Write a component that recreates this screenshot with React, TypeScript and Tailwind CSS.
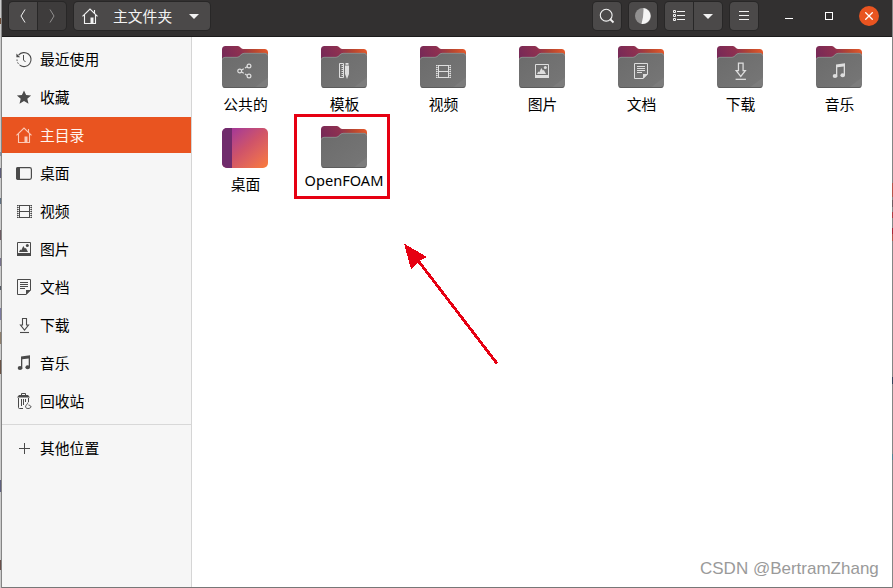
import { useState, type ReactNode } from "react";

type IconName =
  | "recent"
  | "star"
  | "home"
  | "desktop"
  | "video"
  | "picture"
  | "document"
  | "download"
  | "music"
  | "trash"
  | "plus"
  | "share"
  | "template";

const GLYPHS: Record<IconName, ReactNode> = {
  recent: (
    <g fill="none" stroke="currentColor">
      <path d="M2.6 4.2A7 7 0 1 1 4 14.3" strokeWidth="1.1" />
      <path d="M1 8.5a7 7 0 0 0 3 5.8" strokeDasharray="1.6 1.4" />
      <path d="M7.500 4v5l2 2" />
      <path d="M0.4 2.6v3.6h3.8z" fill="currentColor" stroke="none" />
    </g>
  ),
  star: <path fill="currentColor" d="M8 1.400l2.100 4.600 5 .4-3.800 3.300 1.200 5L8 12l-4.500 2.700 1.200-5L.9 6.400l5-.4z" />,
  home: (
    <g fill="none" stroke="currentColor" strokeWidth="1.1">
      <path d="M.5 8.3 8 1l7.500 7.300M2.500 7v8.500h11V7M12.500 2v4" />
      <path d="M8.500 9.500h3v6h-3z" fill="currentColor" stroke="none" />
    </g>
  ),
  desktop: (
    <g>
      <rect x=".6" y="2.600" width="14.800" height="11.800" rx="1.800" fill="none" stroke="currentColor" strokeWidth="1.200" />
      <path d="M2 2h2v13H2a2 2 0 0 1-2-2V4a2 2 0 0 1 2-2z" fill="currentColor" />
    </g>
  ),
  video: (
    <g fill="none" stroke="currentColor">
      <path d="M3.500 2v13M13.500 2v13M3.500 2.500h10M3.500 8.500h10M3.500 14.500h10" />
      <path d="M1.500 2v13M15.500 2v13" strokeDasharray="1.300 .7" />
      <path d="M2.500 2v13M14.500 2v13" strokeDasharray="1 1" opacity=".7" />
    </g>
  ),
  picture: (
    <g>
      <path d="M1.500 1.500h13v13h-13z" fill="none" stroke="currentColor" />
      <path d="M1 12h14v3H1zM3 11l1.300-2.500 1 .7L7.300 5l1.600 2.500 1-.5L12 11z" fill="currentColor" />
      <circle cx="11.300" cy="4.500" r="1.500" fill="currentColor" />
    </g>
  ),
  document: (
    <g fill="none" stroke="currentColor">
      <path d="M1.500.500h13V11L10 15.500H1.500z" />
      <path d="M4 3.500h8M4 5.500h8M4 7.500h8M4 9.500h5" />
      <path d="M10 16v-5h5z" fill="currentColor" stroke="none" />
    </g>
  ),
  download: (
    <g fill="none" stroke="currentColor" strokeWidth="1.100">
      <path d="M6.500 1.500h4v6.500h2L8.500 13 4.500 8h2z" />
      <path d="M4 15.500h9" />
    </g>
  ),
  music: (
    <g>
      <path d="M5 1.500 14 .300v12h-1.300V3.500L6.300 4.300V14H5z" fill="currentColor" />
      <ellipse cx="4" cy="13" rx="2.300" ry="2" fill="currentColor" />
      <ellipse cx="11.700" cy="12.200" rx="2.300" ry="2" fill="currentColor" />
    </g>
  ),
  trash: (
    <g fill="none" stroke="currentColor">
      <path d="M5.500 2V.500h4V2" />
      <path d="M1 4.500 3 2h9l2 2.500z" fill="currentColor" stroke="none" />
      <path d="M2.500 5v9.500a1 1 0 0 0 1 1H7M12.500 5v4M5.500 6v7M7.500 6v6M9.500 6v3" />
      <path d="M12 9.500c-.5 1.500-2 2.300-2.500 4.300.3 1.200 1.300 1.700 2.500 1.700s2.700-.4 3-1.700c-.3-1.300-1.500-1.500-2.500-1.800" />
    </g>
  ),
  plus: <path d="M8.500 3v11M3 8.500h11" stroke="currentColor" />,
  share: (
    <g fill="none" stroke="currentColor" strokeWidth="1.200">
      <circle cx="2.700" cy="8" r="1.900" />
      <circle cx="12" cy="3" r="1.900" />
      <circle cx="12" cy="13" r="1.900" />
      <path d="M4.500 7l2.300-1.300M8 5l2-1.200M4.500 9l2.300 1.300M8 11l2 1.200" />
    </g>
  ),
  template: (
    <g>
      <path d="M3.500.500h4v14h-4z" fill="none" stroke="currentColor" />
      <path d="M5.500 2.500H7M5.500 4.500H7M5.500 6.500H7M5.500 8.500H7M5.500 10.500H7M5.500 12.500H7" stroke="currentColor" />
      <path d="M9 2.500h4v8.500l-2 5-2-5zM9.500 0h3v1.800h-3z" fill="currentColor" />
    </g>
  ),
};

function Icon({ name, className = "" }: { name: IconName; className?: string }) {
  return (
    <svg viewBox="0 0 16 16" className={`block size-4 shrink-0 overflow-visible ${className}`}>
      {GLYPHS[name]}
    </svg>
  );
}

const PLACES: { icon: IconName; label: string }[] = [
  { icon: "recent", label: "最近使用" },
  { icon: "star", label: "收藏" },
  { icon: "home", label: "主目录" },
  { icon: "desktop", label: "桌面" },
  { icon: "video", label: "视频" },
  { icon: "picture", label: "图片" },
  { icon: "document", label: "文档" },
  { icon: "download", label: "下载" },
  { icon: "music", label: "音乐" },
  { icon: "trash", label: "回收站" },
];

const FOLDERS: { icon?: IconName; label: string; desktop?: boolean }[] = [
  { icon: "share", label: "公共的" },
  { icon: "template", label: "模板" },
  { icon: "video", label: "视频" },
  { icon: "picture", label: "图片" },
  { icon: "document", label: "文档" },
  { icon: "download", label: "下载" },
  { icon: "music", label: "音乐" },
  { label: "桌面", desktop: true },
  { label: "OpenFOAM" },
];

function Folder({ icon }: { icon?: IconName }) {
  return (
    <svg viewBox="0 0 46 42" className="block h-[42px] w-[46px]">
      <defs>
        <linearGradient id="folder-back" x1="0" y1=".3" x2="1" y2=".1">
          <stop offset="0" stopColor="#782a57" />
          <stop offset=".4" stopColor="#8f3050" />
          <stop offset=".7" stopColor="#b9472f" />
          <stop offset="1" stopColor="#e95a2b" />
        </linearGradient>
        <linearGradient id="folder-front" x1="0" y1="0" x2="1" y2="1">
          <stop offset="0" stopColor="#6b6b6b" />
          <stop offset=".84" stopColor="#757575" />
          <stop offset=".86" stopColor="#7c7c7c" />
          <stop offset="1" stopColor="#7c7c7c" />
        </linearGradient>
      </defs>
      <path d="M0 3.500A3.500 3.500 0 0 1 3.500 0h12.500c2 0 3 3 5 3h21.500a3.500 3.500 0 0 1 3.500 3.500V20H0z" fill="url(#folder-back)" />
      <path d="M0 14a3 3 0 0 1 3-3h12c3 0 3.500-4 7-4h21a3 3 0 0 1 3 3v28.500a3.500 3.500 0 0 1-3.500 3.500h-39a3.500 3.500 0 0 1-3.500-3.500z" fill="url(#folder-front)" />
      <path d="M.5 13.500A2.500 2.500 0 0 1 3 11.300h12.200c3 0 3.500-4 7-4H43a2.500 2.500 0 0 1 2.500 2.200" fill="none" stroke="#929292" strokeWidth=".8" />
      <path d="M1 40.500a3 3 0 0 0 2 1h40a3 3 0 0 0 2-1" fill="none" stroke="#5c5c5c" />
      {icon && (
        <g transform={icon === "download" ? "translate(14 15.500) scale(1.150)" : "translate(15 17)"} color="#dedede">
          {GLYPHS[icon]}
        </g>
      )}
    </svg>
  );
}

function DesktopFolder() {
  return (
    <div className="mt-0.5 flex h-10 w-[46px] overflow-hidden rounded-[5px] bg-linear-to-br from-[#a83a93] from-15% via-[#cf5369] via-50% to-[#fb7c37]">
      <div className="w-2.5 bg-[#702c6c]" />
    </div>
  );
}

const BTN = "flex items-center justify-center bg-[#4b4949] shadow-[0_0_0_1px_#282727]";

function HeaderBar() {
  return (
    <header className="flex h-[37px] shrink-0 items-start border-b border-[#1c1b1b] bg-[#323030] pt-0.5 pr-[13px] pl-[7px] text-[#f2f2f2]">
      <div className="flex h-7">
        <button className={`${BTN} w-7 rounded-l-[4px]`}>
          <svg viewBox="0 0 6 14" className="h-[14px] w-[6px]" fill="none" stroke="currentColor">
            <path d="M5 .5 1 7l4 6.500" />
          </svg>
        </button>
        <button className="ml-px flex w-7 items-center justify-center rounded-r-[4px] bg-[#3e3c3c] text-[#929090] shadow-[0_0_0_1px_#282727]">
          <svg viewBox="0 0 6 14" className="h-[14px] w-[6px]" fill="none" stroke="currentColor">
            <path d="M1 .5 5 7l-4 6.500" />
          </svg>
        </button>
      </div>
      <button className="ml-2 flex h-7 w-[136px] items-center rounded-[4px] bg-[#4b4949] pl-2 shadow-[0_0_0_1px_#282727]">
        <Icon name="home" />
        <span className="ml-[15px] pt-px text-[14.8px] leading-7">主文件夹</span>
        <svg viewBox="0 0 10 5" className="ml-[17px] h-[5px] w-2.5">
          <path d="M0 0h10L5 5z" fill="currentColor" />
        </svg>
      </button>

      <button className={`${BTN} ml-auto size-7 rounded-[4px]`}>
        <svg viewBox="0 0 16 16" className="size-4" fill="none" stroke="currentColor">
          <circle cx="7.200" cy="7.200" r="5.900" strokeWidth="1.100" />
          <path d="m11 11 3.500 3.500" strokeWidth="1.800" />
        </svg>
      </button>
      <button className={`${BTN} ml-2 size-7 rounded-[4px]`}>
        <svg viewBox="0 0 16 16" className="size-4">
          <circle cx="8" cy="8" r="8" fill="#929191" />
          <path d="M8.500 0a8 8 0 0 1-2 15.900Q8.800 8 8.500 0z" fill="#f5f5f5" />
          <path d="M8.500 0A8 8 0 0 1 6.500 15.900 8 8 0 0 0 8.500 0z" fill="#f5f5f5" />
        </svg>
      </button>
      <div className="ml-2 flex h-7">
        <button className={`${BTN} w-7 rounded-l-[4px]`}>
          <svg viewBox="0 0 12 12" className="h-3 w-3" fill="none" stroke="currentColor">
            <path d="M.5.5h2v2h-2zM.5 4.500h2v2h-2zM.5 8.500h2v2h-2zM4 1.500h8M4 5.500h8M4 9.500h8" />
          </svg>
        </button>
        <button className={`${BTN} ml-px w-7 rounded-r-[4px]`}>
          <svg viewBox="0 0 10 5" className="h-[5px] w-2.5">
            <path d="M0 0h10L5 5z" fill="currentColor" />
          </svg>
        </button>
      </div>
      <button className={`${BTN} ml-2 size-7 rounded-[4px]`}>
        <svg viewBox="0 0 10 10" className="size-2.5" stroke="currentColor">
          <path d="M0 .5h10M0 4.500h10M0 8.500h10" />
        </svg>
      </button>
      <div className="mt-4 ml-[27px] h-px w-2 bg-white" />
      <div className="mt-2.5 ml-8 size-2 border border-white" />
      <button className="mt-1 ml-[26px] flex size-5 items-center justify-center rounded-full bg-[#e95420]">
        <svg viewBox="0 0 8 8" className="size-2" stroke="#fff" strokeWidth="1.300">
          <path d="m.3.3 7.400 7.400M7.700.3.300 7.700" />
        </svg>
      </button>
    </header>
  );
}

export default function App() {
  const [place, setPlace] = useState("主目录");

  return (
    <div className="relative flex h-[588px] w-[893px] overflow-hidden bg-white font-['Liberation_Sans','Noto_Sans_CJK_SC',sans-serif]">
      {/* slivers of the window behind */}
      <div className="w-px bg-[#cbcbcb]">
        <div className="mt-[18px] h-1.5 bg-[#6b4a35]" />
        <div className="mt-[128px] h-1 bg-[#8494a8]" />
        <div className="mt-3 h-2.5 bg-[#5d5c78]" />
        <div className="mt-5 h-1.5 bg-[#5f6f80]" />
        <div className="mt-[26px] h-2.5 bg-[#6e5b62]" />
        <div className="mt-[18px] h-2 bg-[#77718c]" />
        <div className="mt-5 h-1 bg-[#555b66]" />
        <div className="mt-[18px] h-3 bg-[#7c7ba0]" />
        <div className="mt-3 h-3 bg-[#8f7f6c]" />
        <div className="mt-4 h-3.5 bg-[#6b5244]" />
        <div className="mt-[106px] h-3 bg-[#5f6180]" />
        <div className="mt-[68px] h-2.5 bg-[#6b4f4a]" />
      </div>
      <div className="w-px bg-[#858585]" />
      <div className="flex min-w-0 flex-1 flex-col border-b border-[#777]">
        <HeaderBar />
        <div className="flex min-h-0 flex-1">
          <nav className="flex w-[190px] shrink-0 flex-col border-r border-[#d5d5d5] bg-[#f6f6f6] pt-[3px] text-[14.8px] text-black">
            {PLACES.map((p) => (
              <button
                key={p.label}
                onClick={() => setPlace(p.label)}
                className={`my-px flex h-9 shrink-0 items-center pl-3.5 text-left ${
                  p.label === place ? "bg-[#e95420] text-[#fff4ef]" : ""
                }`}
              >
                <Icon name={p.icon} className={p.label === place ? "text-[#fbc9b6]" : "text-[#4a4a4a]"} />
                <span className="ml-2 pt-0.5">{p.label}</span>
              </button>
            ))}
            <div className="mt-1 h-px bg-[#d8d8d8]" />
            <button className="mt-[5px] flex h-9 items-center pl-3.5 text-left">
              <Icon name="plus" className="text-[#4a4a4a]" />
              <span className="ml-2 pt-0.5">其他位置</span>
            </button>
          </nav>

          <main className="grid flex-1 grid-cols-[repeat(7,98px)] content-start gap-x-px pt-[9px] pl-1">
            {FOLDERS.map((f, i) => (
              <div key={i} className="flex h-20 flex-col items-center">
                {f.desktop ? <DesktopFolder /> : <Folder icon={f.icon} />}
                {f.icon || f.desktop ? (
                  <span className="mt-[7px] pl-px text-[14.8px] leading-5 text-black">{f.label}</span>
                ) : (
                  <span className="mt-0.5 font-['Noto_Sans',sans-serif] text-[14.6px] leading-5 text-black">
                    {f.label}
                  </span>
                )}
              </div>
            ))}
          </main>
        </div>
      </div>
      <div className="w-px bg-[#858585]">
        <div className="mt-[183px] h-3.5 bg-[#b5564a]" />
        <div className="mt-[3px] h-[7px] bg-[#6f5a60]" />
        <div className="mt-[5px] h-1.5 bg-[#b03a42]" />
        <div className="mt-2.5 h-1.5 bg-[#a82838]" />
        <div className="h-[7px] bg-[#b5564a]" />
        <div className="mt-[136px] h-[7px] bg-[#33435a]" />
        <div className="mt-[70px] h-1.5 bg-[#4f8494]" />
      </div>

      {/* annotations drawn over the window */}
      <div className="absolute top-[114px] left-[294px] h-[85px] w-24 border-3 border-[#e60012]" />
      <svg className="absolute top-[240px] left-[400px] h-32 w-[104px]" viewBox="0 0 104 128" shapeRendering="crispEdges">
        <path d="M4 3.500 27 17 20.500 20.500 18 22.500 11 29z" fill="#e60012" />
        <path d="M18 20.500 97 123.500" stroke="#e60012" strokeWidth="2.900" />
      </svg>
      <div className="absolute top-[557px] left-[700px] text-[17px] leading-6 whitespace-nowrap text-[#9a9a9a]">
        CSDN @BertramZhang
      </div>
    </div>
  );
}
